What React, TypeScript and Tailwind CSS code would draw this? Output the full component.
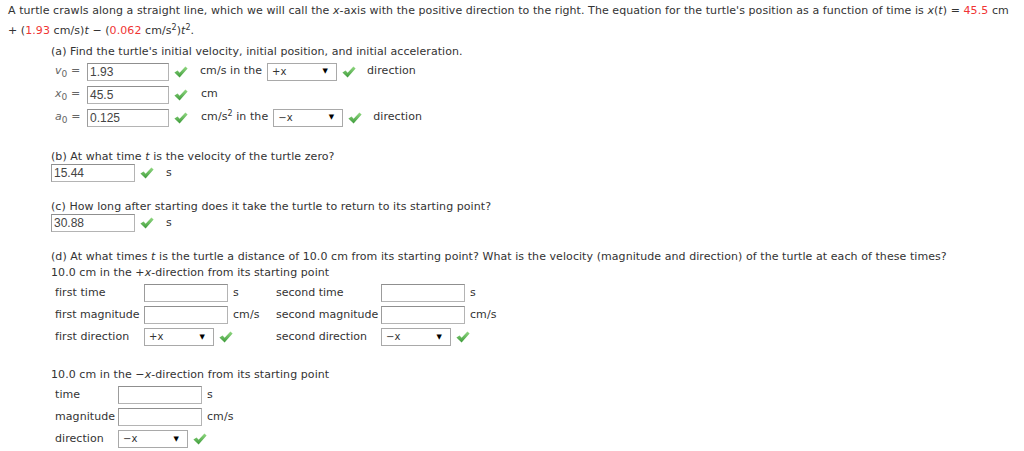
import React from "react";

const red = "text-[#f03434]";

function Check() {
  return (
    <svg width="14" height="12" viewBox="0 0 14 12" className="shrink-0 block">
      <defs>
        <linearGradient id="ck" x1="0" y1="0" x2="0" y2="1">
          <stop offset="0" stopColor="#94da84" />
          <stop offset="1" stopColor="#3d9b3a" />
        </linearGradient>
      </defs>
      <path d="M0.4 6.6 L3.6 4.4 L5.6 6.8 L11.4 0.4 L13.6 2.6 L5.6 11.4 Z" fill="url(#ck)" />
    </svg>
  );
}

function Box({ value = "", w = "w-[84px]" }: { value?: string; w?: string }) {
  return (
    <div
      className={`${w} h-[18px] shrink-0 border border-[#b4b4b4] border-t-[#8f8f8f] border-l-[#9c9c9c] bg-white px-[2px] flex items-center text-[12px] text-[#444] leading-none tracking-normal`}
      style={{ fontFamily: '"Liberation Sans", Arial, sans-serif' }}
    >
      {value}
    </div>
  );
}

function Select({ value, w = "w-[70px]" }: { value: string; w?: string }) {
  return (
    <div
      className={`${w} h-[18px] shrink-0 border border-[#a9a9a9] bg-white pl-[4px] pr-[8px] flex items-center justify-between text-[10px] text-[#333] leading-none`}
    >
      <span>{value}</span>
      <span className="text-[7px] text-black">▼</span>
    </div>
  );
}

function Sub({ children }: { children: React.ReactNode }) {
  return <sub className="text-[9px]">{children}</sub>;
}

function Sq() {
  return <sup className="text-[8px]">2</sup>;
}

export default function App() {
  return (
    <div
      className="w-[1024px] h-[451px] overflow-hidden bg-white text-[11px] text-[#333] tracking-[0.07px]"
      style={{ fontFamily: '"DejaVu Sans", Verdana, sans-serif' }}
    >
      <div className="px-[8px] pt-[1px] leading-[20px] whitespace-nowrap">
        <div>
          A turtle crawls along a straight line, which we will call the <i>x</i>-axis with the positive direction to
          the right. The equation for the turtle's position as a function of time is <i>x</i>(<i>t</i>) ={" "}
          <span className={red}>45.5</span> cm
        </div>
        <div>
          + (<span className={red}>1.93</span> cm/s)<i>t</i> − (<span className={red}>0.062</span> cm/s<Sq />)
          <i>t</i>
          <Sq />.
        </div>
      </div>

      <div className="pl-[51px]">
        {/* (a) */}
        <div className="mt-[3px] leading-[16px]">(a) Find the turtle's initial velocity, initial position, and initial acceleration.</div>
        <div className="h-[23px] flex items-center">
          <span className="w-[36px] pl-[4px] text-[#666]">
            <i>v</i>
            <Sub>0</Sub> =
          </span>
          <Box value="1.93" w="w-[82px]" />
          <span className="ml-[5px]"><Check /></span>
          <span className="ml-[12px]">cm/s in the</span>
          <span className="ml-[5px]"><Select value="+x" /></span>
          <span className="ml-[5px]"><Check /></span>
          <span className="ml-[11px]">direction</span>
        </div>
        <div className="h-[23px] flex items-center">
          <span className="w-[36px] pl-[4px] text-[#666]">
            <i>x</i>
            <Sub>0</Sub> =
          </span>
          <Box value="45.5" w="w-[82px]" />
          <span className="ml-[5px]"><Check /></span>
          <span className="ml-[13px]">cm</span>
        </div>
        <div className="h-[23px] flex items-center">
          <span className="w-[36px] pl-[4px] text-[#666]">
            <i>a</i>
            <Sub>0</Sub> =
          </span>
          <Box value="0.125" w="w-[82px]" />
          <span className="ml-[5px]"><Check /></span>
          <span className="ml-[13px]">
            cm/s<Sq /> in the
          </span>
          <span className="ml-[5px]"><Select value="−x" /></span>
          <span className="ml-[5px]"><Check /></span>
          <span className="ml-[11px]">direction</span>
        </div>

        {/* (b) */}
        <div className="mt-[20px] leading-[15px]">
          (b) At what time <i>t</i> is the velocity of the turtle zero?
        </div>
        <div className="h-[18px] flex items-center">
          <Box value="15.44" />
          <span className="ml-[5px]"><Check /></span>
          <span className="ml-[12px]">s</span>
        </div>

        {/* (c) */}
        <div className="mt-[17px] leading-[15px]">
          (c) How long after starting does it take the turtle to return to its starting point?
        </div>
        <div className="h-[18px] flex items-center">
          <Box value="30.88" />
          <span className="ml-[5px]"><Check /></span>
          <span className="ml-[12px]">s</span>
        </div>

        {/* (d) */}
        <div className="mt-[17px] leading-[15px] whitespace-nowrap">
          (d) At what times <i>t</i> is the turtle a distance of 10.0 cm from its starting point? What is the velocity
          (magnitude and direction) of the turtle at each of these times?
        </div>
        <div className="leading-[18px]">
          10.0 cm in the +<i>x</i>-direction from its starting point
        </div>
        <div className="h-[22px] flex items-center">
          <span className="w-[93px] pl-[4px]">first time</span>
          <Box />
          <span className="w-[48px] pl-[5px]">s</span>
          <span className="w-[105px] tracking-normal">second time</span>
          <Box />
          <span className="pl-[5px]">s</span>
        </div>
        <div className="h-[22px] flex items-center">
          <span className="w-[93px] pl-[4px] tracking-normal">first magnitude</span>
          <Box />
          <span className="w-[48px] pl-[5px]">cm/s</span>
          <span className="w-[105px] tracking-normal">second magnitude</span>
          <Box />
          <span className="pl-[5px]">cm/s</span>
        </div>
        <div className="h-[22px] flex items-center">
          <span className="w-[93px] pl-[4px]">first direction</span>
          <Select value="+x" w="w-[70px]" />
          <span className="w-[62px] pl-[5px]"><Check /></span>
          <span className="w-[105px] tracking-normal">second direction</span>
          <Select value="−x" w="w-[70px]" />
          <span className="pl-[5px]"><Check /></span>
        </div>

        <div className="mt-[18px] leading-[18px]">
          10.0 cm in the −<i>x</i>-direction from its starting point
        </div>
        <div className="h-[22px] flex items-center">
          <span className="w-[67px] pl-[4px]">time</span>
          <Box />
          <span className="pl-[5px]">s</span>
        </div>
        <div className="h-[22px] flex items-center">
          <span className="w-[67px] pl-[4px]">magnitude</span>
          <Box />
          <span className="pl-[5px]">cm/s</span>
        </div>
        <div className="h-[22px] flex items-center">
          <span className="w-[67px] pl-[4px]">direction</span>
          <Select value="−x" w="w-[70px]" />
          <span className="pl-[5px]"><Check /></span>
        </div>
      </div>
    </div>
  );
}
